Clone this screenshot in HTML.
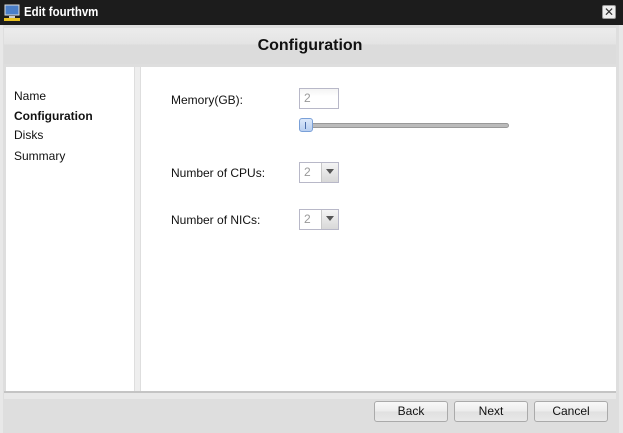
<!DOCTYPE html>
<html><head><style>
*{margin:0;padding:0;box-sizing:border-box}
body{width:623px;height:433px;overflow:hidden;background:#dedede;font-family:"Liberation Sans",sans-serif;font-size:12px;position:relative}
.tb{position:absolute;left:0;top:0;width:623px;height:25px;background:#1c1c1c}
.tt{position:absolute;left:24px;top:4px;color:#fff;font-size:13px;font-weight:bold;transform:scaleX(.88);transform-origin:left}
.x{position:absolute;left:602px;top:5px;width:14px;height:14px;background:#eee;border:1px solid #999;border-radius:2px;font-size:12px;line-height:12px;text-align:center;color:#333}
.frame{position:absolute;left:0;top:25px;width:623px;height:408px;background:#dedede;border-left:3px solid #e8e8e8;border-right:4px solid #e8e8e8}
.hdr{position:absolute;left:4px;top:28px;width:612px;height:36px;background:linear-gradient(#ececec,#e4e4e4 45%,#dcdcdc 46%,#dcdcdc);text-align:center;font-size:16px;font-weight:bold;line-height:36px;color:#111}
.lp{position:absolute;left:6px;top:67px;width:128px;height:324px;background:#fff}
.gap{position:absolute;left:135px;top:67px;width:5px;height:324px;background:#eee}
.rp{position:absolute;left:141px;top:67px;width:475px;height:324px;background:#fff}
.sh{position:absolute;left:4px;top:391px;width:612px;height:2px;background:#c4c4c4}
.bb{position:absolute;left:4px;top:393px;width:612px;height:6px;background:#e8e8e8}
.nav{position:absolute;left:14px;color:#111}
.lbl{position:absolute;left:171px;color:#111}
.inp{position:absolute;left:299px;width:40px;height:21px;border:1px solid #b8b8c8;background:linear-gradient(#f4f4f4,#fff 40%);color:#999;padding-left:4px;line-height:19px}
.sel{position:absolute;left:299px;width:40px;height:21px;border:1px solid #b8b8c8;background:#fff;color:#999;padding-left:4px;line-height:19px}
.sel i{position:absolute;right:0;top:0;width:17px;height:19px;background:linear-gradient(#f4f4f4,#d8d8d8);border-left:1px solid #c8c8c8}
.sel i:after{content:"";position:absolute;left:4px;top:6px;border-left:4px solid transparent;border-right:4px solid transparent;border-top:5px solid #555}
.btn{position:absolute;top:401px;width:74px;height:21px;border:1px solid #aaa;border-radius:3px;background:linear-gradient(#f8f8f8,#ececec 50%,#e0e0e0 51%,#e8e8e8);text-align:center;line-height:19px;color:#111}
</style></head><body>
<div class="tb"></div>
<svg style="position:absolute;left:4px;top:4px" width="16" height="18"><rect x="1" y="1" width="14" height="10" fill="#4a7ec8" stroke="#ddd"/><rect x="5" y="12" width="6" height="2" fill="#ccc"/><rect x="0" y="14" width="16" height="3" fill="#e8c020"/></svg>
<div class="tt">Edit fourthvm</div>
<div class="x">✕</div>
<div class="frame"></div>
<div class="hdr">Configuration</div>
<div class="lp"></div><div class="gap"></div><div class="rp"></div>
<div class="sh"></div><div class="bb"></div>
<div class="nav" style="top:89px">Name</div>
<div class="nav" style="top:109px;font-weight:bold">Configuration</div>
<div class="nav" style="top:128px">Disks</div>
<div class="nav" style="top:149px">Summary</div>
<div class="lbl" style="top:93px">Memory(GB):</div>
<div class="inp" style="top:88px">2</div>
<div style="position:absolute;left:300px;top:123px;width:209px;height:5px;border-radius:3px;background:#bbb;border:1px solid #999"></div>
<div style="position:absolute;left:299px;top:118px;width:14px;height:14px;border:1px solid #7aa0d8;border-radius:3px;background:linear-gradient(#dbe8fa,#b8cff0)"><div style="position:absolute;left:5px;top:3px;width:1px;height:7px;background:#4a6ca8"></div></div>
<div class="lbl" style="top:166px">Number of CPUs:</div>
<div class="sel" style="top:162px">2<i></i></div>
<div class="lbl" style="top:213px">Number of NICs:</div>
<div class="sel" style="top:209px">2<i></i></div>
<div class="btn" style="left:374px">Back</div>
<div class="btn" style="left:454px">Next</div>
<div class="btn" style="left:534px">Cancel</div>
</body></html>
